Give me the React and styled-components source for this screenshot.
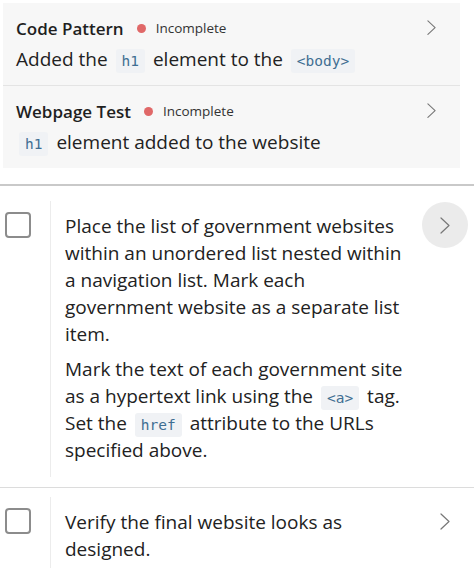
import React from 'react';
import styled, { createGlobalStyle } from 'styled-components';

const GlobalStyle = createGlobalStyle`
  body {
    margin: 0;
    background: #fff;
    font-family: "Open Sans", "Noto Sans", sans-serif;
    color: #222;
  }
`;

const Page = styled.div`
  width: 474px;
  overflow: hidden;
`;

const Results = styled.div`
  padding: 3px 14px 0 3px;
`;

const ResultCard = styled.div`
  display: flex;
  background: #f7f7f7;
  padding: 10px 12px 10px 13px;
  border-bottom: ${p => (p.$last ? 'none' : '1px solid #e4e4e4')};
`;

const CardBody = styled.div`
  flex: 1;
`;

const CardHead = styled.div`
  display: flex;
  align-items: center;
  height: 30px;
`;

const CardTitle = styled.span`
  font-size: 17px;
  font-weight: 600;
  color: #1f1f1f;
`;

const Dot = styled.span`
  width: 9px;
  height: 9px;
  border-radius: 50%;
  background: #e06868;
  margin: 0 10px 0 13px;
`;

const Status = styled.span`
  font-size: 13.5px;
  color: #333;
`;

const CardText = styled.div`
  font-size: 19px;
  line-height: 32px;
  color: #222;
`;

const Code = styled.code`
  font-family: "DejaVu Sans Mono", "Liberation Mono", monospace;
  font-size: 14.5px;
  line-height: 1;
  color: #3f6e92;
  background: #f0f2f5;
  padding: 4px 6px;
  margin: 0 3px;
  border-radius: 3px;
`;

const Chevron = styled.svg`
  width: ${p => p.$size || 10}px;
  height: ${p => (p.$size || 10) * 1.7}px;
  flex-shrink: 0;
`;

const ChevronWrap = styled.div`
  display: flex;
  align-items: flex-start;
  padding: 7px 12px 0 0;
`;

const Divider = styled.div`
  height: 0;
  border-top: ${p => (p.$strong ? '2px solid #c9c9c9' : '1px solid #dcdcdc')};
  margin-top: ${p => p.$top || 0}px;
`;

const Step = styled.div`
  display: flex;
  padding: ${p => p.$pad};
`;

const CheckCol = styled.div`
  width: 45px;
  padding: 11px 0 0 5px;
  border-right: 1px solid #ececec;
`;

const Checkbox = styled.div`
  width: 22px;
  height: 22px;
  border: 2px solid #8c8c8c;
  border-radius: 4px;
`;

const StepText = styled.div`
  flex: 1;
  padding: 12px 0 13px 14px;
  font-size: 19px;
  line-height: 27px;
  color: #222;

  p {
    margin: 0 0 8px;
  }
  p:last-child {
    margin-bottom: 0;
  }
`;

const RoundBtn = styled.div`
  width: 46px;
  height: 46px;
  margin: 1px 6px 0 8px;
  border-radius: 50%;
  background: ${p => (p.$filled ? '#ebebeb' : 'transparent')};
  display: flex;
  align-items: center;
  justify-content: center;
  flex-shrink: 0;
`;

const ChevronIcon = ({ size }) => (
  <Chevron $size={size} viewBox="0 0 10 17" fill="none">
    <path d="M1 1 L9 8.5 L1 16" stroke="#777" strokeWidth="1.2" strokeLinecap="round" strokeLinejoin="round" />
  </Chevron>
);

const results = [
  {
    title: 'Code Pattern',
    body: (
      <>
        Added the <Code>h1</Code> element to the <Code>&lt;body&gt;</Code>
      </>
    ),
  },
  {
    title: 'Webpage Test',
    body: (
      <>
        <Code>h1</Code> element added to the website
      </>
    ),
  },
];

const App = () => (
  <Page>
    <GlobalStyle />
    <Results>
      {results.map((r, i) => (
        <ResultCard key={r.title} $last={i === results.length - 1}>
          <CardBody>
            <CardHead>
              <CardTitle>{r.title}</CardTitle>
              <Dot />
              <Status>Incomplete</Status>
            </CardHead>
            <CardText>{r.body}</CardText>
          </CardBody>
          <ChevronWrap>
            <ChevronIcon size={9} />
          </ChevronWrap>
        </ResultCard>
      ))}
    </Results>

    <Divider $strong $top={16} />
    <Step $pad="15px 0 10px">
      <CheckCol>
        <Checkbox />
      </CheckCol>
      <StepText>
        <p>
          Place the list of government websites within an unordered list nested within a navigation
          list. Mark each government website as a separate list item.
        </p>
        <p>
          Mark the text of each government site as a hypertext link using the <Code>&lt;a&gt;</Code> tag.
          Set the <Code>href</Code> attribute to the URLs specified above.
        </p>
      </StepText>
      <RoundBtn $filled>
        <ChevronIcon size={10} />
      </RoundBtn>
    </Step>

    <Divider />
    <Step $pad="9px 0 0">
      <CheckCol>
        <Checkbox />
      </CheckCol>
      <StepText>
        <p>Verify the final website looks as designed.</p>
      </StepText>
      <RoundBtn>
        <ChevronIcon size={10} />
      </RoundBtn>
    </Step>
  </Page>
);

export default App;
